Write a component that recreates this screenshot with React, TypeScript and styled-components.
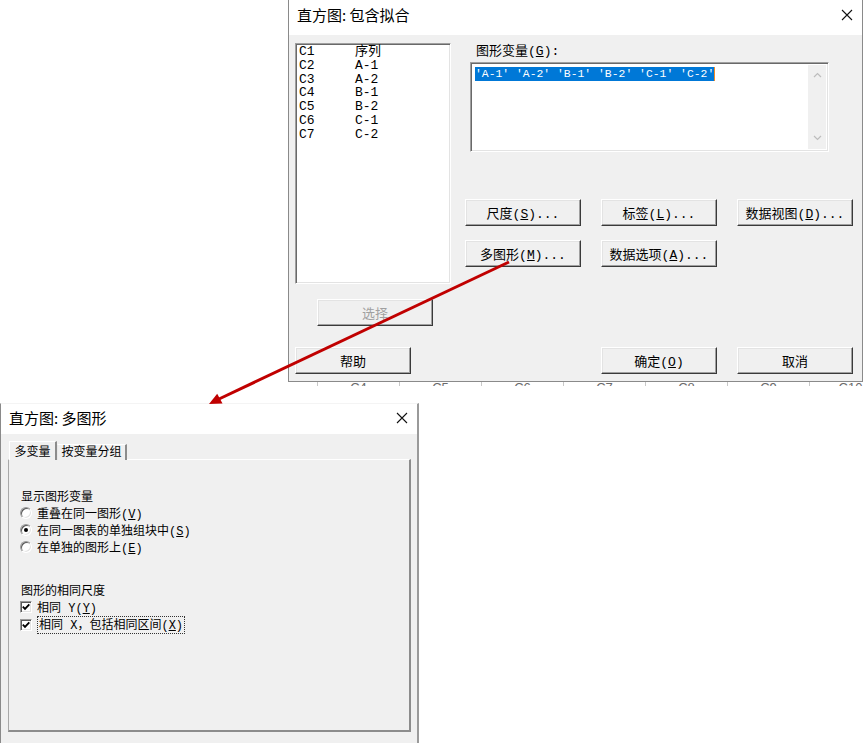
import styled, { createGlobalStyle } from "styled-components";

const GlobalStyle = createGlobalStyle`
  html, body {
    margin: 0;
    padding: 0;
    background: #fff;
  }
  body {
    font-family: "Noto Sans CJK SC", sans-serif;
  }
`;

const UI_FONT = `"Liberation Mono", "Noto Sans CJK SC", monospace`;

const Desktop = styled.div`
  position: relative;
  width: 866px;
  height: 743px;
  overflow: hidden;
  background: #fff;
`;

const Window = styled.div<{ $x: number; $y: number; $w: number; $h: number }>`
  position: absolute;
  left: ${(p) => p.$x}px;
  top: ${(p) => p.$y}px;
  width: ${(p) => p.$w}px;
  height: ${(p) => p.$h}px;
  box-sizing: border-box;
  display: flex;
  flex-direction: column;
  background: #f0f0f0;
  border: 1px solid #8a8a8a;
  border-top-color: #f4f4f4;
`;

const TitleBar = styled.div<{ $h: number; $pb: number }>`
  height: ${(p) => p.$h}px;
  flex: none;
  box-sizing: border-box;
  display: flex;
  align-items: center;
  justify-content: space-between;
  padding: 0 9px ${(p) => p.$pb}px 8px;
  background: #fff;
  font-family: "Noto Sans CJK SC", sans-serif;
  font-size: 15px;
  line-height: 18px;
  color: #000;
`;

const CloseIcon = () => (
  <svg width="12" height="12" viewBox="0 0 12 12">
    <path d="M1 1 L11 11 M11 1 L1 11" stroke="#111" strokeWidth="1.1" fill="none" />
  </svg>
);

/* ---------- top dialog ---------- */

const TopBody = styled.div`
  flex: 1;
  display: flex;
  flex-direction: column;
  padding: 8px 0 0 6px;
  font-family: ${UI_FONT};
  font-size: 13px;
`;

const MainRow = styled.div`
  display: flex;
`;

const LeftCol = styled.div`
  width: 156px;
  display: flex;
  flex-direction: column;
`;

const RightCol = styled.div`
  margin-left: 14px;
  display: flex;
  flex-direction: column;
`;

const Sunken = styled.div`
  box-sizing: border-box;
  background: #fff;
  border: 1px solid;
  border-color: #a0a0a0 #fff #fff #a0a0a0;
  box-shadow: inset 1px 1px 0 #696969, inset -1px -1px 0 #e3e3e3;
`;

const ListBox = styled(Sunken)`
  width: 156px;
  height: 241px;
  padding: 1px 0 0 3px;
`;

const ListRow = styled.div`
  display: grid;
  grid-template-columns: 56px 1fr;
  height: 13.8px;
  line-height: 13.8px;
  font-size: 13px;
  color: #000;
`;

const FieldLabel = styled.div`
  height: 19px;
  line-height: 17px;
  padding-left: 11px;
  color: #000;
`;

const TextBox = styled(Sunken)`
  margin-left: 5px;
  width: 359px;
  height: 90px;
  display: flex;
  padding: 2px;
`;

const TextArea = styled.div`
  flex: 1;
  padding: 1px 0 0 2px;
`;

const Selected = styled.span`
  display: inline-block;
  height: 14px;
  line-height: 14px;
  background: #0078d7;
  color: #fff;
  font-family: "Liberation Mono", monospace;
  font-size: 11.4px;
  white-space: pre;
  border-right: 1px solid #f08a24;
`;

const ScrollBar = styled.div`
  width: 18px;
  background: #f0f0f0;
  display: flex;
  flex-direction: column;
  align-items: center;
  justify-content: space-between;
  padding: 7px 0 8px;
`;

const Chevron = ({ up }: { up?: boolean }) => (
  <svg width="9" height="6" viewBox="0 0 9 6">
    <path
      d={up ? "M1 5 L4.5 1.5 L8 5" : "M1 1 L4.5 4.5 L8 1"}
      stroke="#bdbdbd"
      strokeWidth="1.2"
      fill="none"
    />
  </svg>
);

const ButtonGrid = styled.div`
  margin-top: 47px;
  display: grid;
  grid-template-columns: repeat(3, 116px);
  grid-auto-rows: 27px;
  column-gap: 20px;
  row-gap: 14px;
`;

const Button = styled.button<{ $ml?: number; $mt?: number }>`
  width: 116px;
  height: 27px;
  margin-left: ${(p) => p.$ml ?? 0}px;
  margin-top: ${(p) => p.$mt ?? 0}px;
  box-sizing: border-box;
  padding: 0;
  background: #f0f0f0;
  border: 1px solid;
  border-color: #fff #3a3a3a #3a3a3a #fff;
  box-shadow: inset -1px -1px 0 #a0a0a0, inset 1px 1px 0 #e3e3e3;
  font-family: ${UI_FONT};
  font-size: 13px;
  color: #000;
  white-space: nowrap;

  &:disabled {
    color: #a0a0a0;
  }
`;

const BottomRow = styled.div`
  display: flex;
  margin-top: 21px;
`;

const SheetPeek = styled.div`
  position: absolute;
  left: 288px;
  top: 382px;
  width: 575px;
  height: 4px;
  overflow: hidden;
  display: grid;
  grid-template-columns: 30px repeat(7, 82px);
`;

const SheetCol = styled.div`
  border-right: 1px solid #c8c8c8;
  text-align: center;
  font-family: "Liberation Sans", sans-serif;
  font-size: 13px;
  line-height: 13px;
  color: #6a6a6a;
  margin-top: -1px;
`;

/* ---------- bottom dialog ---------- */

const BottomWindow = styled(Window)`
  border-right-width: 2px;
  border-right-color: #9a9a9a;
  border-bottom: none;
`;

const SubBody = styled.div`
  flex: 1;
  padding: 7px 0 0 7px;
  font-family: ${UI_FONT};
  font-size: 12px;
`;

const TabStrip = styled.div`
  display: flex;
  align-items: flex-end;
  height: 19px;
  padding-left: 1px;
  position: relative;
  z-index: 1;
`;

const Tab = styled.div<{ $active?: boolean; $w: number }>`
  box-sizing: border-box;
  width: ${(p) => p.$w}px;
  height: ${(p) => (p.$active ? 19 : 16)}px;
  background: #f0f0f0;
  border-top: 1px solid #fff;
  border-left: 1px solid ${(p) => (p.$active ? "#fff" : "#e8e8e8")};
  border-right: 2px solid #8c8c8c;
  text-align: center;
  line-height: ${(p) => (p.$active ? 17 : 12)}px;
  font-family: "Noto Sans CJK SC", sans-serif;
  font-size: 12px;
  color: #000;
`;

const TabPanel = styled.div`
  box-sizing: border-box;
  width: 403px;
  height: 273px;
  margin-top: -1px;
  border-top: 1px solid #fff;
  border-left: 1px solid #a8a8a8;
  border-right: 2px solid #8c8c8c;
  border-bottom: 2px solid #8c8c8c;
  padding: 27px 0 0 11px;
  display: flex;
  flex-direction: column;
`;

const GroupLabel = styled.div<{ $mt?: number }>`
  height: 17px;
  line-height: 17px;
  margin-top: ${(p) => p.$mt ?? 0}px;
  padding-left: 1px;
  font-family: "Noto Sans CJK SC", sans-serif;
  font-size: 12px;
  color: #000;
`;

const OptionRow = styled.div<{ $h: number }>`
  height: ${(p) => p.$h}px;
  display: flex;
  align-items: center;
  gap: 5px;
  font-size: 12px;
  color: #000;
  white-space: nowrap;
`;

const Radio = styled.span<{ $checked?: boolean }>`
  position: relative;
  width: 12px;
  height: 12px;
  box-sizing: border-box;
  border-radius: 50%;
  background: #fff;
  border: 1px solid;
  border-color: #9a9a9a #fff #fff #9a9a9a;
  box-shadow: inset 1px 1px 0 #5a5a5a, inset -1px -1px 0 #e3e3e3;

  &::after {
    content: "";
    display: ${(p) => (p.$checked ? "block" : "none")};
    position: absolute;
    left: 3px;
    top: 3px;
    width: 4px;
    height: 4px;
    border-radius: 50%;
    background: #000;
  }
`;

const CheckBox = styled.span`
  width: 12px;
  height: 12px;
  box-sizing: border-box;
  background: #fff;
  border: 1px solid;
  border-color: #9a9a9a #fff #fff #9a9a9a;
  box-shadow: inset 1px 1px 0 #5a5a5a, inset -1px -1px 0 #e3e3e3;
  display: flex;
  align-items: center;
  justify-content: center;
`;

const CheckMark = () => (
  <svg width="8" height="8" viewBox="0 0 8 8">
    <path d="M0.8 3.6 L3 5.9 L7.3 1.3" stroke="#000" strokeWidth="1.8" fill="none" />
  </svg>
);

const FocusLabel = styled.span`
  border: 1px dotted #333;
  padding: 0 1px;
  line-height: 14px;
`;

const Cjk = styled.span`
  font-family: "Noto Sans CJK SC", sans-serif;
`;

const ArrowLayer = styled.svg`
  position: absolute;
  left: 0;
  top: 0;
  pointer-events: none;
  z-index: 10;
`;

const columns = [
  ["C1", "序列"],
  ["C2", "A-1"],
  ["C3", "A-2"],
  ["C4", "B-1"],
  ["C5", "B-2"],
  ["C6", "C-1"],
  ["C7", "C-2"],
];

export default function App() {
  return (
    <Desktop>
      <GlobalStyle />

      <Window $x={288} $y={-1} $w={575} $h={383}>
        <TitleBar $h={35} $pb={5}>
          <span>直方图: 包含拟合</span>
          <CloseIcon />
        </TitleBar>
        <TopBody>
          <MainRow>
            <LeftCol>
              <ListBox>
                {columns.map(([c, name]) => (
                  <ListRow key={c}>
                    <span>{c}</span>
                    <span>{name}</span>
                  </ListRow>
                ))}
              </ListBox>
              <Button $ml={22} $mt={15} disabled>
                <Cjk>选择</Cjk>
              </Button>
            </LeftCol>
            <RightCol>
              <FieldLabel>
                图形变量(<u>G</u>):
              </FieldLabel>
              <TextBox>
                <TextArea>
                  <Selected>'A-1' 'A-2' 'B-1' 'B-2' 'C-1' 'C-2'</Selected>
                </TextArea>
                <ScrollBar>
                  <Chevron up />
                  <Chevron />
                </ScrollBar>
              </TextBox>
              <ButtonGrid>
                <Button>
                  尺度(<u>S</u>)...
                </Button>
                <Button>
                  标签(<u>L</u>)...
                </Button>
                <Button>
                  数据视图(<u>D</u>)...
                </Button>
                <Button>
                  多图形(<u>M</u>)...
                </Button>
                <Button>
                  数据选项(<u>A</u>)...
                </Button>
              </ButtonGrid>
            </RightCol>
          </MainRow>
          <BottomRow>
            <Button>帮助</Button>
            <Button $ml={190}>
              确定(<u>O</u>)
            </Button>
            <Button $ml={20}>取消</Button>
          </BottomRow>
        </TopBody>
      </Window>

      <SheetPeek>
        <SheetCol />
        {["C4", "C5", "C6", "C7", "C8", "C9", "C10"].map((c) => (
          <SheetCol key={c}>{c}</SheetCol>
        ))}
      </SheetPeek>

      <BottomWindow $x={0} $y={403} $w={419} $h={345}>
        <TitleBar $h={30} $pb={2}>
          <span>直方图: 多图形</span>
          <CloseIcon />
        </TitleBar>
        <SubBody>
          <TabStrip>
            <Tab $active $w={48}>
              多变量
            </Tab>
            <Tab $w={70}>按变量分组</Tab>
          </TabStrip>
          <TabPanel>
            <GroupLabel>显示图形变量</GroupLabel>
            <OptionRow $h={17}>
              <Radio />
              <span>
                <Cjk>重叠在同一图形</Cjk>(<u>V</u>)
              </span>
            </OptionRow>
            <OptionRow $h={17}>
              <Radio $checked />
              <span>
                <Cjk>在同一图表的单独组块中</Cjk>(<u>S</u>)
              </span>
            </OptionRow>
            <OptionRow $h={17}>
              <Radio />
              <span>
                <Cjk>在单独的图形上</Cjk>(<u>E</u>)
              </span>
            </OptionRow>
            <GroupLabel $mt={26}>图形的相同尺度</GroupLabel>
            <OptionRow $h={18}>
              <CheckBox>
                <CheckMark />
              </CheckBox>
              <span>
                <Cjk>相同</Cjk> Y(<u>Y</u>)
              </span>
            </OptionRow>
            <OptionRow $h={18}>
              <CheckBox>
                <CheckMark />
              </CheckBox>
              <FocusLabel>
                <Cjk>相同</Cjk> X<Cjk>，包括相同区间</Cjk>(<u>X</u>)
              </FocusLabel>
            </OptionRow>
          </TabPanel>
        </SubBody>
      </BottomWindow>

      <ArrowLayer width="866" height="743" viewBox="0 0 866 743">
        <line x1="509" y1="262" x2="219" y2="399" stroke="#c00000" strokeWidth="3" />
        <polygon points="209,404 222.5,403.6 217.2,393.8" fill="#c00000" />
      </ArrowLayer>
    </Desktop>
  );
}
